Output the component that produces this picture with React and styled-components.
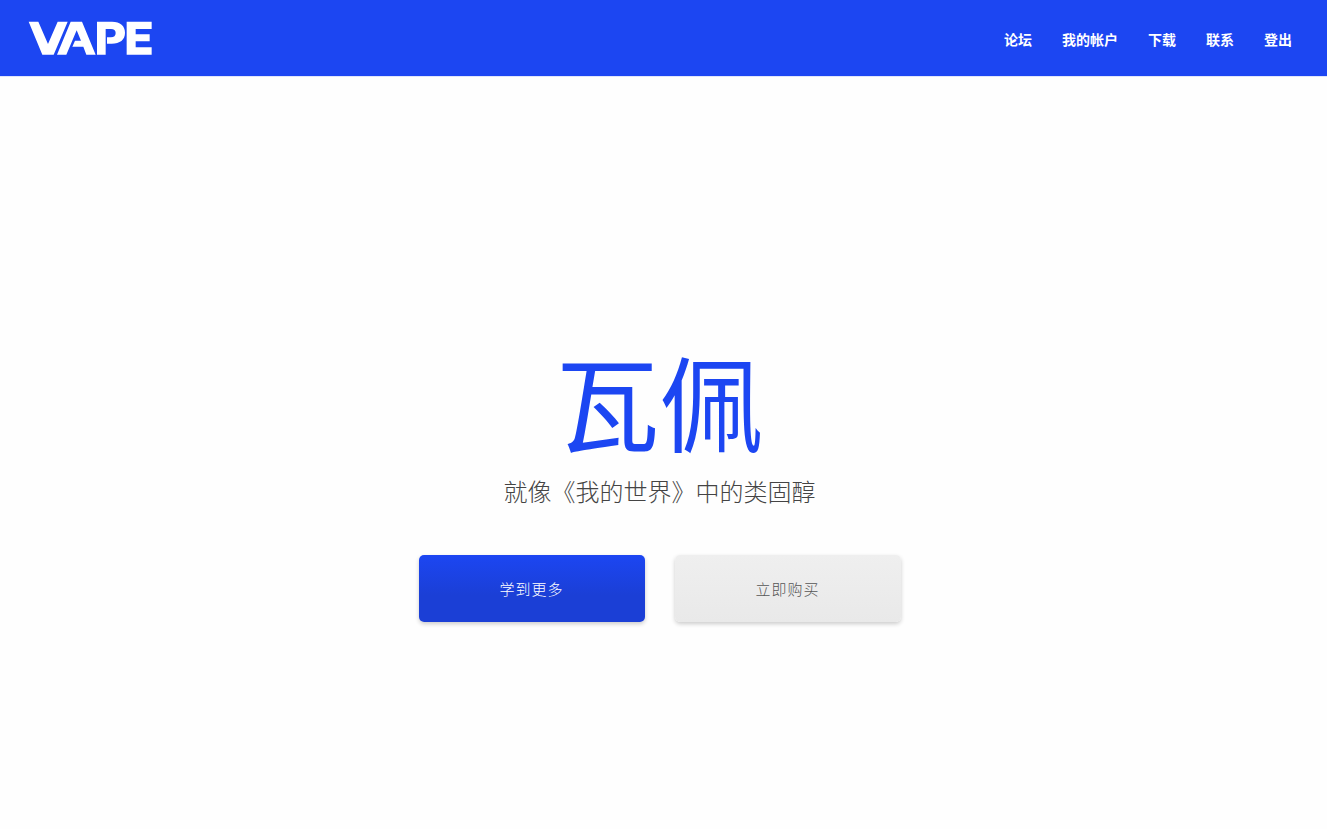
import React from 'react';
import styled, { createGlobalStyle } from 'styled-components';

const GlobalStyle = createGlobalStyle`
  * {
    box-sizing: border-box;
  }
  body {
    margin: 0;
    background: #fefefe;
    font-family: "Liberation Sans", "Noto Sans CJK SC", sans-serif;
  }
`;

const Page = styled.div`
  min-height: 100vh;
  display: flex;
  flex-direction: column;
`;

const Header = styled.header`
  display: flex;
  align-items: center;
  justify-content: space-between;
  height: 77px;
  padding: 0 35px 0 28px;
  background: #1c46f2;
  border-bottom: 1px solid #dfe5fb;
`;

const LogoLink = styled.a`
  display: flex;
  color: #fff;
`;

const Nav = styled.nav`
  display: flex;
  gap: 30px;
  padding-top: 4px;
`;

const NavLink = styled.a`
  color: #fff;
  font-size: 14px;
  font-weight: 700;
  line-height: 20px;
  text-decoration: none;
`;

const Hero = styled.main`
  flex: 1;
  display: flex;
  flex-direction: column;
  align-items: center;
  justify-content: center;
  padding: 72px 8px 0 0;
`;

const Title = styled.h1`
  margin: 0;
  color: #1c46f2;
  font-size: 104px;
  font-weight: 400;
  line-height: 104px;
`;

const Subtitle = styled.p`
  margin: 14px 0 44px;
  color: #444;
  font-size: 24px;
  font-weight: 300;
  line-height: 36px;
`;

const Actions = styled.div`
  display: flex;
  flex-wrap: wrap;
  justify-content: center;
  gap: 30px;
`;

const Button = styled.button`
  width: 226px;
  height: 67px;
  padding: 0;
  border: 0;
  border-radius: 5px;
  background: ${props => props.$primary
    ? 'linear-gradient(#1c46f2, #1b3fd6 60%, #1b3fd6)'
    : 'linear-gradient(#efefef, #e9e9e9)'};
  box-shadow: 0 2px 4px rgba(0, 0, 0, 0.2);
  color: ${props => props.$primary ? '#fff' : '#555'};
  font-family: inherit;
  font-size: 15px;
  font-weight: 300;
  letter-spacing: 1px;
  cursor: pointer;
`;

const links = ['论坛', '我的帐户', '下载', '联系', '登出'];

const Logo = () => (
  <svg width="124" height="34" viewBox="0 0 372 102" fill="currentColor" aria-hidden="true">
    <path d="M2 2H31L60 69L89 2H119L77 101H43Z" />
    <path d="M128 2H162L203 101H175L166 77H133L141 59H159L146 28L115 101H87Z" />
    <path d="M207 2H252C277 2 291 15 291 35C291 56 276 68 251 68H237V49H249C258 49 263 44 263 36C263 28 258 24 249 24H233V101H207Z" />
    <path d="M296 2H371V24H323V40H365V61H323V79H371V101H296Z" />
  </svg>
);

const App = () => (
  <Page>
    <GlobalStyle />
    <Header>
      <LogoLink href="#" aria-label="VAPE">
        <Logo />
      </LogoLink>
      <Nav>
        {links.map(link => (
          <NavLink key={link} href="#">{link}</NavLink>
        ))}
      </Nav>
    </Header>
    <Hero>
      <Title>瓦佩</Title>
      <Subtitle>就像《我的世界》中的类固醇</Subtitle>
      <Actions>
        <Button type="button" $primary>学到更多</Button>
        <Button type="button">立即购买</Button>
      </Actions>
    </Hero>
  </Page>
);

export default App;
